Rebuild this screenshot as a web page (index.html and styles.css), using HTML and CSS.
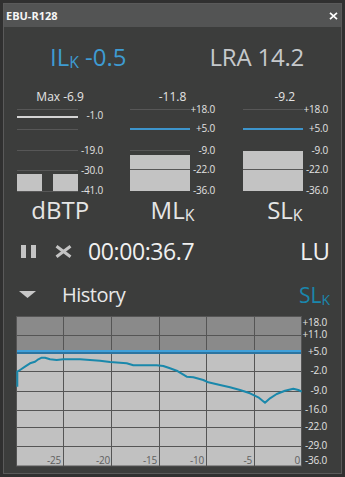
FILE: index.html
```html
<!DOCTYPE html>
<html>
<head>
<meta charset="utf-8">
<link rel="stylesheet" href="styles.css">
</head>
<body>
<div class="win">
  <div class="titlebar">
    <span class="title">EBU-R128</span>
    <svg class="close" width="9" height="8" viewBox="0 0 9 8"><path d="M1 0.8 L8 7.2 M8 0.8 L1 7.2" stroke="#ffffff" stroke-width="1.7" fill="none"/></svg>
  </div>
  <div class="content">
    <div class="summary">
      <div class="il">IL<span class="sub">K</span> -0.5</div>
      <div class="lra">LRA 14.2</div>
    </div>
    <div class="meters">
      <div class="meter">
        <div class="mval">Max -6.9</div>
        <svg class="scale" width="112" height="92" viewBox="0 0 112 92">
          <rect x="13" y="5" width="61" height="1" fill="#575757"/>
          <rect x="13" y="12" width="61" height="2" fill="#d4d4d4"/>
          <rect x="13" y="25" width="61" height="1" fill="#575757"/>
          <rect x="13" y="46" width="61" height="1" fill="#575757"/>
          <rect x="13" y="66" width="61" height="1" fill="#575757"/>
          <rect x="13" y="70" width="25" height="17" fill="#c3c3c3"/>
          <rect x="49" y="70" width="25" height="17" fill="#c3c3c3"/>
          <rect x="13" y="87" width="61" height="1" fill="#575757"/>
          <g class="tick">
            <text x="99" y="15.3">-1.0</text>
            <text x="99" y="49.6">-19.0</text>
            <text x="99" y="69.6">-30.0</text>
            <text x="99" y="90.3">-41.0</text>
          </g>
        </svg>
        <div class="mname">dBTP</div>
      </div>
      <div class="meter">
        <div class="mval">-11.8</div>
        <svg class="scale" width="112" height="92" viewBox="0 0 112 92">
          <rect x="14" y="5" width="60" height="1" fill="#575757"/>
          <rect x="14" y="24" width="60" height="2" fill="#3d95cc"/>
          <rect x="14" y="46" width="60" height="1" fill="#575757"/>
          <rect x="14" y="51" width="60" height="36" fill="#c3c3c3"/>
          <rect x="14" y="65" width="60" height="1" fill="#575757"/>
          <g class="tick">
            <text x="99" y="8.6">+18.0</text>
            <text x="99" y="28">+5.0</text>
            <text x="99" y="49.6">-9.0</text>
            <text x="99" y="68.6">-22.0</text>
            <text x="99" y="90.3">-36.0</text>
          </g>
        </svg>
        <div class="mname">ML<span class="sub">K</span></div>
      </div>
      <div class="meter">
        <div class="mval">-9.2</div>
        <svg class="scale" width="112" height="92" viewBox="0 0 112 92">
          <rect x="14" y="5" width="60" height="1" fill="#575757"/>
          <rect x="14" y="24" width="60" height="2" fill="#3d95cc"/>
          <rect x="14" y="47" width="60" height="40" fill="#c3c3c3"/>
          <rect x="14" y="65" width="60" height="1" fill="#575757"/>
          <g class="tick">
            <text x="99" y="8.6">+18.0</text>
            <text x="99" y="28">+5.0</text>
            <text x="99" y="49.6">-9.0</text>
            <text x="99" y="68.6">-22.0</text>
            <text x="99" y="90.3">-36.0</text>
          </g>
        </svg>
        <div class="mname">SL<span class="sub">K</span></div>
      </div>
    </div>
    <div class="controls">
      <svg class="pause" width="15" height="13" viewBox="0 0 15 13"><rect x="0" y="0" width="5" height="13" fill="#c4c4c4"/><rect x="10" y="0" width="5" height="13" fill="#c4c4c4"/></svg>
      <svg class="stop" width="17" height="13" viewBox="0 0 17 13"><path d="M1.5 1.2 L15.5 11.8 M15.5 1.2 L1.5 11.8" stroke="#c4c4c4" stroke-width="3" fill="none"/></svg>
      <span class="time">00:00:36.7</span>
      <span class="unit">LU</span>
    </div>
    <div class="hist-head">
      <svg class="tri" width="17" height="7" viewBox="0 0 17 7"><polygon points="0,0 17,0 8.5,7" fill="#c8c8c8"/></svg>
      <span class="hist-title">History</span>
      <span class="hist-sel">SL<span class="sub">K</span></span>
    </div>
    <div class="graph">
      <svg width="315" height="152" viewBox="0 0 315 152">
        <rect x="0" y="0" width="286" height="36" fill="#8a8a8a"/>
        <rect x="0" y="36" width="286" height="114" fill="#c1c1c1"/>
        <g fill="#555555">
          <rect x="0" y="19" width="286" height="1"/>
          <rect x="0" y="55" width="286" height="1"/>
          <rect x="0" y="75" width="286" height="1"/>
          <rect x="0" y="94" width="286" height="1"/>
          <rect x="0" y="111" width="286" height="1"/>
          <rect x="0" y="130" width="286" height="1"/>
          <rect x="47" y="0" width="1" height="150"/>
          <rect x="95" y="0" width="1" height="150"/>
          <rect x="143" y="0" width="1" height="150"/>
          <rect x="190" y="0" width="1" height="150"/>
          <rect x="238" y="0" width="1" height="150"/>
        </g>
        <rect x="0" y="34" width="286" height="2" fill="#40a0da"/>
        <rect x="0" y="36" width="286" height="2" fill="#2c74a0"/>
        <rect x="0.5" y="0.5" width="285" height="149.5" fill="none" stroke="#555555" stroke-width="1"/>
        <polyline fill="none" stroke="#1a88ab" stroke-width="2" stroke-linejoin="round" points="1.3,70.7 1.3,55.7 4,54 9,50.7 14,47.3 19,45.7 22.3,43.3 25.7,41.7 29,41.7 34,43.3 40.7,44 47.3,43.3 54,43.3 64,43.3 74,44 84,44.7 94,46 104,46.7 110.7,47.3 117.3,49.3 130.7,49.3 140.7,49.3 147.3,50 154,52.3 160.7,54.7 170.7,60.7 177.3,61.3 187.3,64 192.3,66.3 204,69 214,71.3 224,74 234,77.3 242.3,81.3 249,86.7 254,82.3 260.7,78 269,74.7 277.3,72.7 282.3,74 285.7,75.7"/>
        <g class="xlab">
          <text x="45" y="148">-25</text>
          <text x="94" y="148">-20</text>
          <text x="141" y="148">-15</text>
          <text x="188" y="148">-10</text>
          <text x="236" y="148">-5</text>
          <text x="284" y="148">0</text>
        </g>
        <g class="ylab">
          <text x="311" y="10.3">+18.0</text>
          <text x="311" y="21.9">+11.0</text>
          <text x="311" y="39.3">+5.0</text>
          <text x="311" y="57.9">-2.0</text>
          <text x="311" y="77.9">-9.0</text>
          <text x="311" y="96.6">-16.0</text>
          <text x="311" y="113.9">-22.0</text>
          <text x="311" y="132.9">-29.0</text>
          <text x="311" y="148.3">-36.0</text>
        </g>
      </svg>
    </div>
  </div>
</div>
</body>
</html>
```
FILE: styles.css
```css
* { box-sizing: border-box; }
html, body { margin: 0; padding: 0; }
body {
  background: #303030;
  width: 345px;
  height: 477px;
  overflow: hidden;
  font-family: "Open Sans", "Noto Sans", sans-serif;
}
.win {
  margin: 3px;
  height: 471px;
  border: 1px solid #5a5a5a;
  background: #3c3d3c;
  display: flex;
  flex-direction: column;
}
.titlebar {
  height: 23px;
  flex: none;
  background: #535454;
  display: flex;
  align-items: center;
  justify-content: space-between;
  padding: 0 3px 0 2px;
}
.title {
  color: #f6f6f6;
  font-weight: 700;
  font-size: 11px;
  line-height: 14px;
}
.close { display: block; }
.content { display: flex; flex-direction: column; }
.summary {
  margin-top: 16px;
  height: 28px;
  display: grid;
  grid-template-columns: 1fr 1fr;
  font-size: 24px;
  line-height: 28px;
  text-align: center;
}
.il { color: #3e9bd2; }
.lra { color: #c6c9cc; letter-spacing: -0.2px; }
.sub {
  font-size: 0.66em;
  line-height: 0;
  position: relative;
  top: 0.12em;
}
.meters {
  margin-top: 19px;
  display: grid;
  grid-template-columns: 1fr 1fr 1fr;
}
.meter { display: flex; flex-direction: column; }
.mval {
  text-align: center;
  font-size: 12px;
  line-height: 14px;
  height: 14px;
  color: #e4e4e4;
}
.scale { display: block; overflow: visible; }
.tick text {
  font-size: 10px;
  fill: #e2e2e2;
  text-anchor: end;
  letter-spacing: -0.2px;
  font-family: "Open Sans", "Noto Sans", sans-serif;
}
.mname {
  text-align: center;
  font-size: 24px;
  line-height: 28px;
  height: 28px;
  color: #e6e6e6;
}
.controls {
  margin-top: 13px;
  height: 28px;
  display: flex;
  align-items: center;
  padding: 0 11px 0 17px;
}
.pause, .stop, .tri { display: block; flex: none; }
.stop { margin-left: 19px; }
.time {
  margin-left: 16px;
  font-size: 23px;
  line-height: 28px;
  letter-spacing: -0.4px;
  color: #f0f0f0;
}
.unit {
  margin-left: auto;
  font-size: 24px;
  line-height: 28px;
  color: #f0f0f0;
}
.hist-head {
  margin-top: 17px;
  height: 26px;
  display: flex;
  align-items: center;
  padding: 0 11px 0 15px;
  font-size: 20px;
  line-height: 26px;
}
.tri { margin-bottom: 2px; }
.hist-title { margin-left: 26px; color: #e8e8e8; letter-spacing: -0.5px; }
.hist-sel { margin-left: auto; color: #1a87ad; font-size: 21px; }
.graph {
  margin-top: 8px;
  padding-left: 12px;
}
.graph svg { display: block; overflow: visible; }
.xlab text {
  font-size: 10px;
  fill: #606060;
  text-anchor: end;
  letter-spacing: -0.2px;
  font-family: "Open Sans", "Noto Sans", sans-serif;
}
.ylab text {
  font-size: 10px;
  fill: #e2e2e2;
  text-anchor: end;
  letter-spacing: -0.2px;
  font-family: "Open Sans", "Noto Sans", sans-serif;
}
```
